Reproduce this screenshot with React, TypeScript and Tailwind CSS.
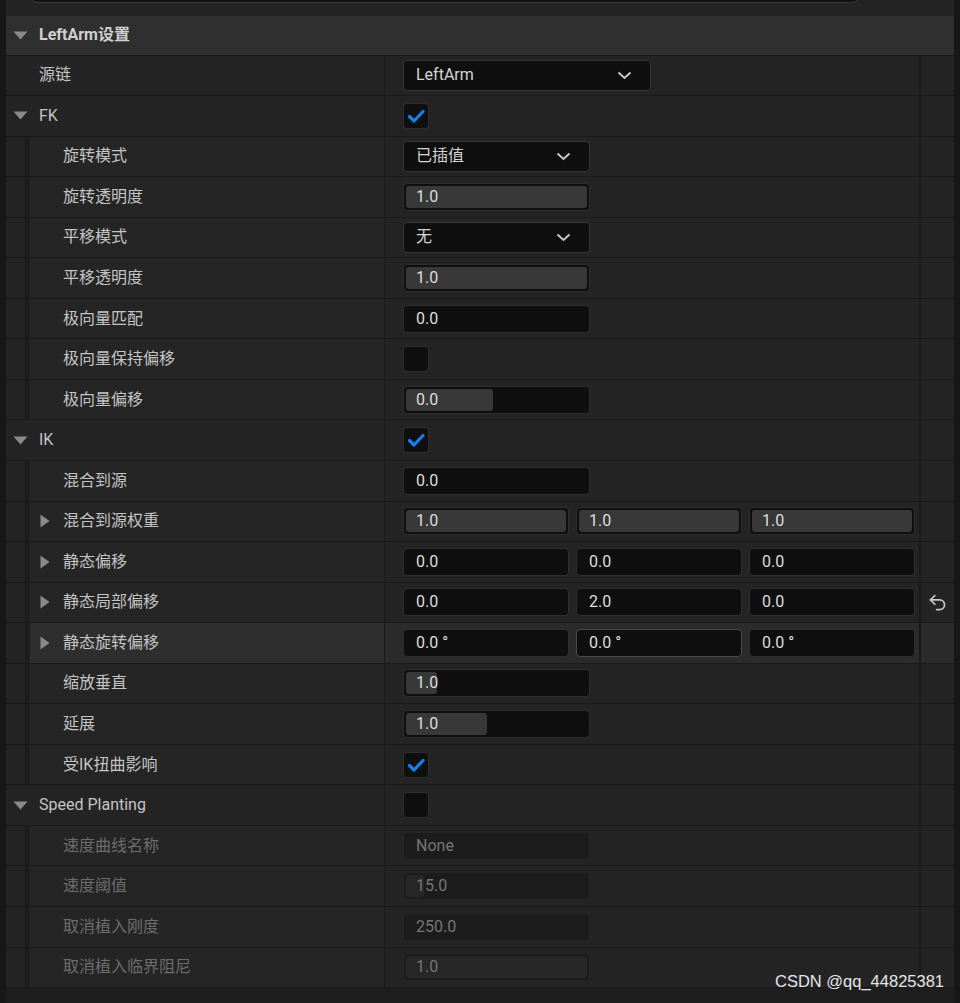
import React from "react";
import { Undo2 } from "lucide-react";

type Value =
  | { kind: "none" }
  | { kind: "dropdown"; text: string; w: number }
  | { kind: "check"; on: boolean }
  | { kind: "num"; text: string; pct: number }
  | { kind: "vec"; items: { text: string; pct: number; ring?: boolean }[] };

type RowDef = {
  label: string;
  level: 0 | 1;
  caret?: "down" | "right";
  value: Value;
  disabled?: boolean;
  hover?: boolean;
  reset?: boolean;
};

const rows: RowDef[] = [
  { label: "源链", level: 0, value: { kind: "dropdown", text: "LeftArm", w: 248 } },
  { label: "FK", level: 0, caret: "down", value: { kind: "check", on: true } },
  { label: "旋转模式", level: 1, value: { kind: "dropdown", text: "已插值", w: 187 } },
  { label: "旋转透明度", level: 1, value: { kind: "num", text: "1.0", pct: 100 } },
  { label: "平移模式", level: 1, value: { kind: "dropdown", text: "无", w: 187 } },
  { label: "平移透明度", level: 1, value: { kind: "num", text: "1.0", pct: 100 } },
  { label: "极向量匹配", level: 1, value: { kind: "num", text: "0.0", pct: 0 } },
  { label: "极向量保持偏移", level: 1, value: { kind: "check", on: false } },
  { label: "极向量偏移", level: 1, value: { kind: "num", text: "0.0", pct: 48 } },
  { label: "IK", level: 0, caret: "down", value: { kind: "check", on: true } },
  { label: "混合到源", level: 1, value: { kind: "num", text: "0.0", pct: 0 } },
  {
    label: "混合到源权重",
    level: 1,
    caret: "right",
    value: {
      kind: "vec",
      items: [
        { text: "1.0", pct: 100 },
        { text: "1.0", pct: 100 },
        { text: "1.0", pct: 100 },
      ],
    },
  },
  {
    label: "静态偏移",
    level: 1,
    caret: "right",
    value: {
      kind: "vec",
      items: [
        { text: "0.0", pct: 0 },
        { text: "0.0", pct: 0 },
        { text: "0.0", pct: 0 },
      ],
    },
  },
  {
    label: "静态局部偏移",
    level: 1,
    caret: "right",
    reset: true,
    value: {
      kind: "vec",
      items: [
        { text: "0.0", pct: 0 },
        { text: "2.0", pct: 0 },
        { text: "0.0", pct: 0 },
      ],
    },
  },
  {
    label: "静态旋转偏移",
    level: 1,
    caret: "right",
    hover: true,
    value: {
      kind: "vec",
      items: [
        { text: "0.0 °", pct: 0 },
        { text: "0.0 °", pct: 0, ring: true },
        { text: "0.0 °", pct: 0 },
      ],
    },
  },
  { label: "缩放垂直", level: 1, value: { kind: "num", text: "1.0", pct: 17 } },
  { label: "延展", level: 1, value: { kind: "num", text: "1.0", pct: 45 } },
  { label: "受IK扭曲影响", level: 1, value: { kind: "check", on: true } },
  { label: "Speed Planting", level: 0, caret: "down", value: { kind: "check", on: false } },
  { label: "速度曲线名称", level: 1, disabled: true, value: { kind: "num", text: "None", pct: 0 } },
  { label: "速度阈值", level: 1, disabled: true, value: { kind: "num", text: "15.0", pct: 10 } },
  { label: "取消植入刚度", level: 1, disabled: true, value: { kind: "num", text: "250.0", pct: 0 } },
  { label: "取消植入临界阻尼", level: 1, disabled: true, value: { kind: "num", text: "1.0", pct: 100 } },
];

function Caret({ dir }: { dir: "down" | "right" }) {
  if (dir === "down") {
    return (
      <svg width="15" height="9" viewBox="0 0 15 9">
        <path d="M0.5 0.5 L14.5 0.5 L7.5 8.5 Z" fill="#8a8a8a" />
      </svg>
    );
  }
  return (
    <svg width="10" height="14" viewBox="0 0 10 14">
      <path d="M0.5 0.5 L9.5 7 L0.5 13.5 Z" fill="#8a8a8a" />
    </svg>
  );
}

function CheckBox({ on }: { on: boolean }) {
  return (
    <div className="flex h-[26px] w-[26px] items-center justify-center rounded-[4px] border border-[#2e2e2e] bg-[#0f0f0f]">
      {on && (
        <svg width="20" height="20" viewBox="0 0 20 20">
          <path
            d="M3.5 10.5 L8 15 L17 5.5"
            fill="none"
            stroke="#1a7de8"
            strokeWidth="3.2"
            strokeLinecap="round"
            strokeLinejoin="round"
          />
        </svg>
      )}
    </div>
  );
}

function Dropdown({ text, w }: { text: string; w: number }) {
  return (
    <div
      className="flex h-[31px] items-center justify-between rounded-[4px] border border-[#353535] bg-[#0f0f0f] pl-[12px] pr-[18px] text-[16px] text-[#d4d4d4]"
      style={{ width: w }}
    >
      <span>{text}</span>
      <svg width="15" height="9" viewBox="0 0 15 9">
        <path d="M1.5 1.5 L7.5 7 L13.5 1.5" fill="none" stroke="#c8c8c8" strokeWidth="2" />
      </svg>
    </div>
  );
}

function NumField({
  text,
  pct,
  w,
  disabled,
  ring,
}: {
  text: string;
  pct: number;
  w?: number;
  disabled?: boolean;
  ring?: boolean;
}) {
  const border = ring ? "border-[#4a4a4a]" : disabled ? "border-[#262626]" : "border-[#2e2e2e]";
  const bg = disabled ? "bg-[#1c1c1c]" : "bg-[#0f0f0f]";
  const fill = disabled ? "bg-[#272727]" : "bg-[#383838]";
  const color = disabled ? "text-[#767676]" : "text-[#dedede]";
  return (
    <div
      className={`relative flex h-[28px] items-center rounded-[4px] border ${border} ${bg} ${w ? "" : "flex-1"}`}
      style={w ? { width: w } : undefined}
    >
      {pct > 0 && (
        <div className="absolute inset-[2px]">
          <div className={`h-full rounded-[3px] ${fill}`} style={{ width: `${pct}%` }} />
        </div>
      )}
      <span className={`relative pl-[12px] text-[16px] ${color}`}>{text}</span>
    </div>
  );
}

function ValueCell({ v, disabled }: { v: Value; disabled?: boolean }) {
  switch (v.kind) {
    case "dropdown":
      return <Dropdown text={v.text} w={v.w} />;
    case "check":
      return <CheckBox on={v.on} />;
    case "num":
      return <NumField text={v.text} pct={v.pct} w={187} disabled={disabled} />;
    case "vec":
      return (
        <div className="flex w-[512px] gap-[7px]">
          {v.items.map((it, i) => (
            <NumField key={i} text={it.text} pct={it.pct} ring={it.ring} />
          ))}
        </div>
      );
    default:
      return null;
  }
}

function Row({ r }: { r: RowDef }) {
  const rowBg = r.hover ? "bg-[#2b2b2b]" : "bg-[#242424]";
  const nameBg = r.hover ? "bg-[#2e2e2e]" : "bg-[#252525]";
  const labelColor = r.disabled ? "text-[#6c6c6c]" : "text-[#c4c4c4]";
  return (
    <div className={`flex h-[40.55px] border-b-[1.5px] border-[#1a1a1a] ${rowBg}`}>
      <div className="flex w-[379px] shrink-0 border-r border-[#1a1a1a]">
        {r.level === 1 ? (
          <>
            <div className="w-[19px] shrink-0 bg-[#242424]" />
            <div className="w-[5px] shrink-0 bg-gradient-to-r from-[#1a1a1a] to-[#202020]" />
            <div className={`flex flex-1 items-center pl-[10px] ${nameBg}`}>
              <div className="flex w-[23px] shrink-0 items-center">
                {r.caret && <Caret dir={r.caret} />}
              </div>
              <span className={`text-[16px] ${labelColor}`}>{r.label}</span>
            </div>
          </>
        ) : (
          <div className="flex flex-1 items-center pl-[7px]">
            <div className="flex w-[26px] shrink-0 items-center">
              {r.caret && <Caret dir={r.caret} />}
            </div>
            <span className={`text-[16px] ${labelColor}`}>{r.label}</span>
          </div>
        )}
      </div>
      <div className="flex w-[536px] shrink-0 items-center border-r-2 border-[#1a1a1a] pl-[18px]">
        <ValueCell v={r.value} disabled={r.disabled} />
      </div>
      <div className="flex flex-1 items-center justify-center">
        {r.reset && <Undo2 size={21} color="#c8c8c8" strokeWidth={2} />}
      </div>
    </div>
  );
}

export default function App() {
  return (
    <div className="relative h-[1003px] w-[960px] overflow-hidden bg-[#171717] font-['Roboto','Noto_Sans_CJK_SC',sans-serif]">
      <div className="mx-[6px] flex h-full flex-col bg-[#1e1e1e]">
        {/* search bar remnant */}
        <div className="h-[16px] shrink-0 overflow-hidden bg-[#242424]">
          <div className="-mt-[27px] ml-[19px] mr-[90px] h-[30px] rounded-[14px] border border-[#3a3a3a] bg-[#0f0f0f]" />
        </div>

        {/* header */}
        <div className="flex h-[39.5px] shrink-0 items-center border-b border-[#1a1a1a] bg-[#2f2f2f] pl-[7px]">
          <div className="flex w-[26px] items-center">
            <Caret dir="down" />
          </div>
          <span className="text-[16px] font-bold text-[#d0d0d0]">LeftArm设置</span>
        </div>

        {rows.map((r, i) => (
          <Row key={i} r={r} />
        ))}
      </div>

      <div className="absolute left-[775px] top-[973px] font-['Liberation_Sans',Arial,sans-serif] text-[16.5px] leading-none text-[#e6e6e6]">
        CSDN @qq_44825381
      </div>
    </div>
  );
}
